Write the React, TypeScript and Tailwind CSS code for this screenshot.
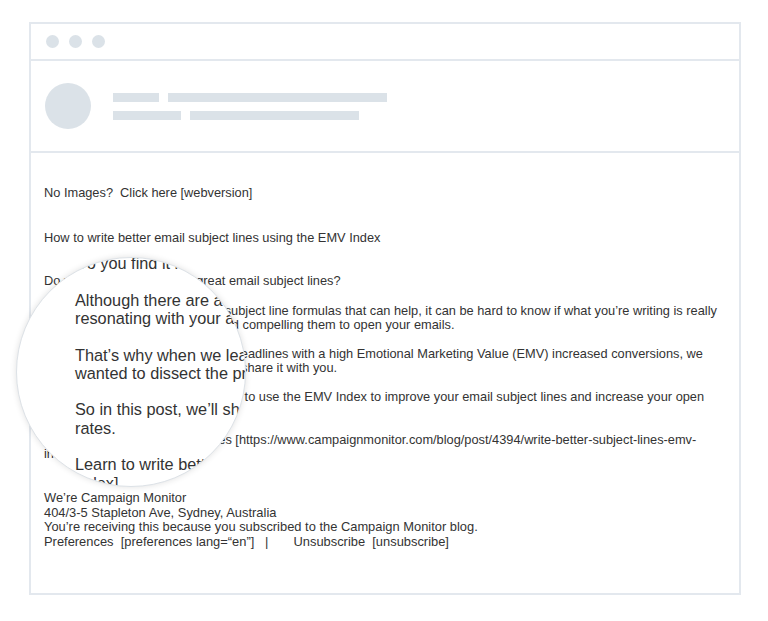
import React from "react";

const L = ({ children }: { children: React.ReactNode }) => (
  <div className="h-[14px] leading-[14px] whitespace-pre">{children}</div>
);

const M = ({ children }: { children: React.ReactNode }) => (
  <div className="h-[18.5px] leading-[18.5px] whitespace-pre">{children}</div>
);

export default function App() {
  return (
    <div
      className="relative w-[768px] h-[621px] bg-white overflow-hidden pt-[22px] pl-[29px]"
      style={{ fontFamily: '"Liberation Sans", Arial, sans-serif' }}
    >
      <div className="w-[712px] h-[573px] border-2 border-[#e3e8ee] flex flex-col">
        {/* title bar */}
        <div className="h-[37px] border-b-2 border-[#e3e8ee] flex items-center gap-[10px] pl-[15px] shrink-0">
          <div className="w-[13px] h-[13px] rounded-full bg-[#dbe2e8]" />
          <div className="w-[13px] h-[13px] rounded-full bg-[#dbe2e8]" />
          <div className="w-[13px] h-[13px] rounded-full bg-[#dbe2e8]" />
        </div>
        {/* header */}
        <div className="h-[92px] border-b-2 border-[#e3e8ee] flex items-center pl-[14px] shrink-0">
          <div className="w-[46px] h-[46px] rounded-full bg-[#dbe2e8]" />
          <div className="ml-[22px] flex flex-col gap-[9px]">
            <div className="flex gap-[9px]">
              <div className="w-[46px] h-[9px] bg-[#dbe2e8]" />
              <div className="w-[219px] h-[9px] bg-[#dbe2e8]" />
            </div>
            <div className="flex gap-[9px]">
              <div className="w-[68px] h-[9px] bg-[#dbe2e8]" />
              <div className="w-[169px] h-[9px] bg-[#dbe2e8]" />
            </div>
          </div>
        </div>
        {/* body */}
        <div className="pt-[33px] pl-[13px] text-[12.8px] text-[#333333]">
          <L>No Images?  Click here [webversion]</L>
          <div className="mt-[31px]">
            <L>How to write better email subject lines using the EMV Index</L>
          </div>
          <div className="mt-[29px]">
            <L>Do you find it hard to write great email subject lines?</L>
          </div>
          <div className="mt-[16px]">
            <L>Although there are a number of subject line formulas that can help, it can be hard to know if what you’re writing is really</L>
            <L>resonating with your audience and compelling them to open your emails.</L>
          </div>
          <div className="mt-[15px]">
            <L>That’s why when we learned that headlines with a high Emotional Marketing Value (EMV) increased conversions, we</L>
            <L>wanted to dissect the process and share it with you.</L>
          </div>
          <div className="mt-[15px]">
            <L>So in this post, we’ll show you how to use the EMV Index to improve your email subject lines and increase your open</L>
            <L>rates.</L>
          </div>
          <div className="mt-[15px]">
            <L>Learn to write better subject lines [https://www.campaignmonitor.com/blog/post/4394/write-better-subject-lines-emv-</L>
            <L>index]</L>
          </div>
          <div className="mt-[30px] leading-[14.7px] text-[12.9px]">
            <div className="h-[14.7px] whitespace-pre">We’re Campaign Monitor</div>
            <div className="h-[14.7px] whitespace-pre">404/3-5 Stapleton Ave, Sydney, Australia</div>
            <div className="h-[14.7px] whitespace-pre">You’re receiving this because you subscribed to the Campaign Monitor blog.</div>
            <div className="h-[14.7px] whitespace-pre">Preferences  [preferences lang=“en”]   |       Unsubscribe  [unsubscribe]</div>
          </div>
        </div>
      </div>

      {/* magnifier */}
      <div className="absolute left-[16px] top-[257px] w-[230px] h-[230px] rounded-full overflow-hidden bg-white border border-[#dde2e7] shadow-[0_0_6px_rgba(0,0,0,0.12)]">
        <div className="absolute left-[58px] top-[-4px] text-[16.3px] text-[#333333]">
          <M>Do you find it hard to write great email subject lines?</M>
          <div className="mt-[18px]">
            <M>Although there are a number of subject line formulas that can help</M>
            <M>resonating with your audience and compelling them</M>
          </div>
          <div className="mt-[18px]">
            <M>That’s why when we learned that headlines with a high</M>
            <M>wanted to dissect the process and share it with you.</M>
          </div>
          <div className="mt-[17.5px]">
            <M>So in this post, we’ll show you how to use the EMV Index</M>
            <M>rates.</M>
          </div>
          <div className="mt-[18px]">
            <M>Learn to write better subject lines [https://www.campaignmonitor.com</M>
            <M>index]</M>
          </div>
        </div>
      </div>
    </div>
  );
}
